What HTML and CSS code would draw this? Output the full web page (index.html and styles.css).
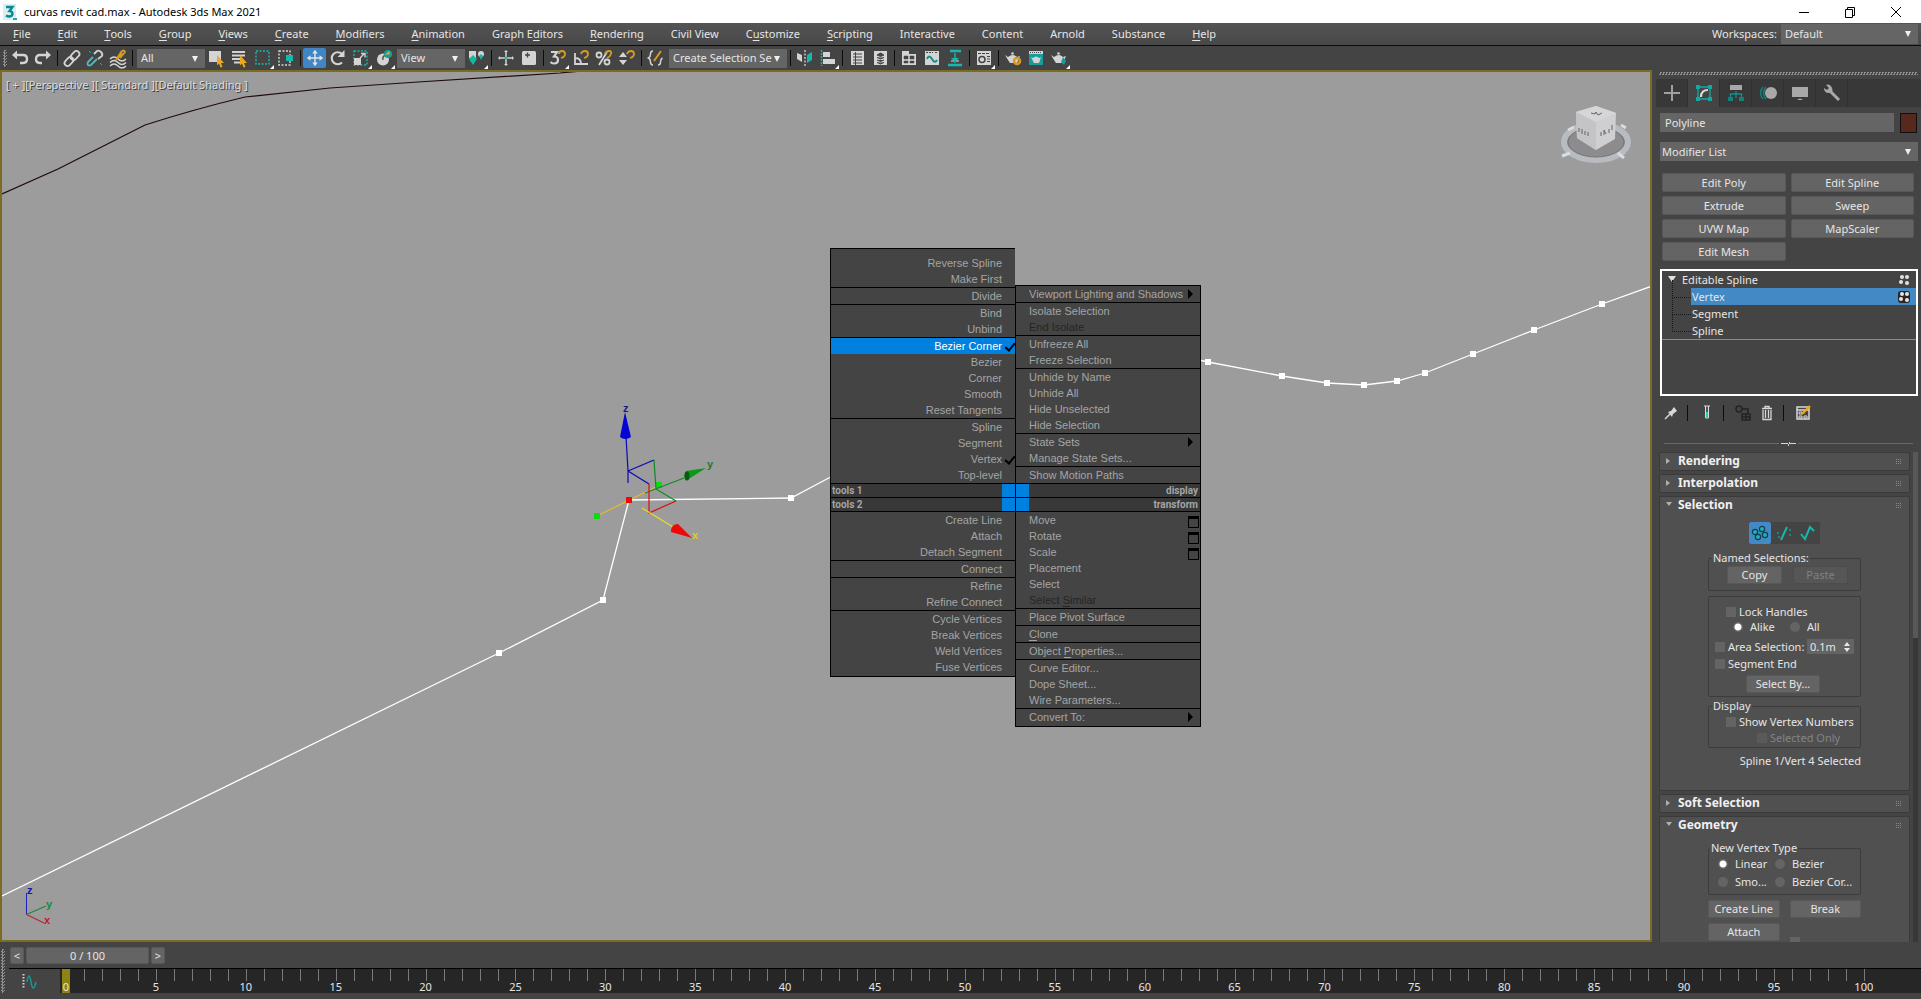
FILE: index.html
```html
<!DOCTYPE html>
<html lang="en">
<head>
<meta charset="utf-8">
<title>curvas revit cad.max - Autodesk 3ds Max 2021</title>
<link rel="stylesheet" href="styles.css">
</head>
<body>
<header class="titlebar">
  <svg class="app-icon" width="16" height="16" viewBox="0 0 16 16"><rect width="13" height="16" fill="#d8eef0"/><path d="M3 3h6.500l-3 4q3 .3 3 2.800t-3 2.700q-2 0-3.500-1" fill="none" stroke="#0a8a92" stroke-width="2.400"/><path d="M10 15h4" stroke="#18b0b0" stroke-width="2"/></svg>
  <h1 class="title">curvas revit cad.max - Autodesk 3ds Max 2021</h1>
  <div class="window-buttons">
    <button aria-label="Minimize"><svg width="12" height="12"><path d="M1 6.500h10" stroke="#000"/></svg></button>
    <button aria-label="Restore"><svg width="12" height="12"><path d="M1.500 3.500h7v8h-7zM3.500 3.500v-2h7v8h-2" fill="none" stroke="#000"/></svg></button>
    <button aria-label="Close"><svg width="12" height="12"><path d="M1 1l10 10M11 1L1 11" stroke="#000"/></svg></button>
  </div>
</header>

<nav class="menubar">
  <div class="menus">
    <button><u>F</u>ile</button><button><u>E</u>dit</button><button><u>T</u>ools</button><button><u>G</u>roup</button><button><u>V</u>iews</button><button><u>C</u>reate</button><button><u>M</u>odifiers</button><button><u>A</u>nimation</button><button>Graph E<u>d</u>itors</button><button><u>R</u>endering</button><button>Civil View</button><button>C<u>u</u>stomize</button><button><u>S</u>cripting</button><button>Interactive</button><button>Content</button><button>Arnold</button><button>Substance</button><button><u>H</u>elp</button>
  </div>
  <label for="workspace">Workspaces:</label>
  <span class="select workspace"><select id="workspace"><option>Default</option></select></span>
</nav>

<div class="toolbar">
  <span class="grip"></span>
  <button aria-label="Undo"><svg viewBox="0 0 22 22"><path d="M5 8h9q4 0 4 4t-4 4h-3" fill="none" stroke="#d4d4d4" stroke-width="2.400"/><path d="M8 3.500v9L3 8z" fill="#d4d4d4"/></svg></button>
  <button aria-label="Redo"><svg viewBox="0 0 22 22"><path d="M17 8H8q-4 0-4 4t4 4h2" fill="none" stroke="#d4d4d4" stroke-width="2.400"/><path d="M14 3.500v9L19 8z" fill="#d4d4d4"/></svg></button>
  <i class="sep"></i>
  <button aria-label="Link"><svg viewBox="0 0 22 22"><g fill="none" stroke="#d4d4d4" stroke-width="1.800"><rect x="9" y="5.500" width="10" height="6" rx="3" transform="rotate(-45 14 8.500)"/><rect x="3" y="11.500" width="10" height="6" rx="3" transform="rotate(-45 8 14.500)"/></g></svg></button>
  <button aria-label="Unlink"><svg viewBox="0 0 22 22"><g fill="none" stroke-width="1.800"><path d="M10 7l3-3q2-1 4 1t1 4l-4 3" stroke="#d4d4d4"/><path d="M9 10l-5 5q-1 2 0 3t3 0l6-6" stroke="#58b6bc"/></g><path d="M5 4l2 2M16 16l2 2" stroke="#14b8b0"/></svg></button>
  <button aria-label="Bind to space warp"><svg viewBox="0 0 22 22"><path d="M3 12q4-4 8 0t8 0M3 15.500q4-4 8 0t8 0M3 19q4-4 8 0t8 0" fill="none" stroke="#d4d4d4" stroke-width="1.500"/><path d="M9 13l5-8q3-3 4 0l-5 6M11 11l4-5" fill="none" stroke="#d79b22" stroke-width="1.800"/></svg></button>
  <i class="sep"></i>
  <span class="select filter"><select aria-label="Selection filter"><option>All</option></select></span>
  <button aria-label="Select"><svg viewBox="0 0 22 22"><path d="M3 4h12v11H3z" fill="#d4d4d4"/><path d="M11 8l7 8h-3l1.500 4-2 .5-1.500-4-2 2z" fill="#eca91f"/></svg></button>
  <button aria-label="Select by name"><svg viewBox="0 0 22 22"><path d="M3 5h13M3 8.500h13M3 12h9M5 15.500h6" stroke="#d4d4d4" stroke-width="2"/><path d="M11 8l7 8h-3l1.500 4-2 .5-1.500-4-2 2z" fill="#eca91f"/></svg></button>
  <button class="fly" aria-label="Rectangular region"><svg viewBox="0 0 22 22"><rect x="4" y="4" width="13" height="13" fill="none" stroke="#14b8b0" stroke-width="1.400" stroke-dasharray="2 1.500"/></svg></button>
  <button aria-label="Window crossing"><svg viewBox="0 0 22 22"><rect x="4" y="4" width="11" height="14" fill="none" stroke="#d4d4d4" stroke-width="1.400" stroke-dasharray="2 1.500"/><rect x="11" y="8" width="7" height="6" fill="#14b8b0"/></svg></button>
  <i class="sep"></i>
  <button class="on" aria-label="Move"><svg viewBox="0 0 22 22"><path d="M11 5v12M5 11h12" stroke="#e4e4e4" stroke-width="1.600"/><path d="M11 2l3 4H8zM11 20l3-4H8zM2 11l4-3v6zM20 11l-4-3v6z" fill="#e4e4e4"/></svg></button>
  <button aria-label="Rotate"><svg viewBox="0 0 22 22"><path d="M15 15.500a6 6 0 1 1 0-8.500" fill="none" stroke="#d4d4d4" stroke-width="2.200"/><path d="M17.500 3v7h-7z" fill="#d4d4d4"/></svg></button>
  <button class="fly" aria-label="Scale"><svg viewBox="0 0 22 22"><rect x="4" y="4" width="13" height="14" fill="none" stroke="#14b8b0" stroke-width="1.400" stroke-dasharray="2 1.500"/><rect x="4" y="11" width="7" height="7" fill="#d4d4d4"/><path d="M10 11l4-4M11 6.500h4v4" stroke="#d4d4d4" fill="none" stroke-width="1.300"/></svg></button>
  <button class="fly" aria-label="Place"><svg viewBox="0 0 22 22"><circle cx="10" cy="12.500" r="6" fill="#d4d4d4"/><path d="M10 13q-1-4 3-5" fill="none" stroke="#555" stroke-width="1.500"/><circle cx="15" cy="7" r="4" fill="#169e9a"/><path d="M12 8l4-4 1 3z" fill="#eca91f"/></svg></button>
  <span class="select coords"><select aria-label="Reference coordinate system"><option>View</option></select></span>
  <button class="fly" aria-label="Pivot center"><svg viewBox="0 0 22 22"><rect x="3" y="4" width="7" height="7" fill="#d4d4d4"/><rect x="12" y="4" width="6" height="6" rx="3" fill="#d4d4d4"/><path d="M7 18l-4-6 4-4 4 4z" fill="#14b89f"/><path d="M15 13l-2-4 2-2 2 2z" fill="#14b89f"/></svg></button>
  <i class="sep"></i>
  <button aria-label="Manipulate"><svg viewBox="0 0 22 22"><path d="M11 4v14M4 11h14" stroke="#d4d4d4" stroke-width="1.500"/><path d="M11 3l2 2h-4zM11 19l2-2H9zM3 11l2-2v4zM19 11l-2-2v4z" fill="#d4d4d4"/><circle cx="11" cy="11" r="1.600" fill="#14b8b0"/></svg></button>
  <button aria-label="Keyboard shortcut override"><svg viewBox="0 0 22 22"><rect x="4" y="4" width="14" height="14" rx="1.500" fill="#d4d4d4"/><path d="M7 8h5M9.500 5.500v5" stroke="#444" stroke-width="1.400"/></svg></button>
  <i class="sep"></i>
  <button class="fly" aria-label="3D snap"><svg viewBox="0 0 22 22"><path d="M4 5h6l-3 4.500q4 0 4 3.500t-4 3.500q-2 0-3.500-1.500" fill="none" stroke="#d4d4d4" stroke-width="2.200"/><path d="M12 7q0-3 3-3t3 3-4 4" fill="none" stroke="#d79b22" stroke-width="1.800"/></svg></button>
  <button aria-label="Angle snap"><svg viewBox="0 0 22 22"><path d="M5 6v11h13M5 11q6 0 6 6" fill="none" stroke="#d4d4d4" stroke-width="1.800"/><path d="M11 7q1-3 4-3t3 3-4 4" fill="none" stroke="#d79b22" stroke-width="1.800"/></svg></button>
  <button aria-label="Percent snap"><svg viewBox="0 0 22 22"><g fill="none" stroke="#d4d4d4" stroke-width="1.800"><circle cx="6" cy="8" r="2.500"/><circle cx="14" cy="15" r="2.500"/><path d="M14 5L6 18"/></g><path d="M12 7q1-3 4-3t2 3-4 4" fill="none" stroke="#d79b22" stroke-width="1.800"/></svg></button>
  <button aria-label="Spinner snap"><svg viewBox="0 0 22 22"><path d="M7 5l4 5H3zM7 18l4-5H3z" fill="#d4d4d4"/><path d="M11 7q1-3 4-3t3 3-4 4" fill="none" stroke="#d79b22" stroke-width="1.800"/></svg></button>
  <i class="sep"></i>
  <button aria-label="Edit named selection sets"><svg viewBox="0 0 22 22"><path d="M8 4Q5.500 4 5.500 7T3.500 11q2 1 2 4t2.500 3M13 18q2.500 0 2.500-3t2-4" fill="none" stroke="#d4d4d4" stroke-width="1.500"/><path d="M9 14L16 4" stroke="#d79b22" stroke-width="2"/></svg></button>
  <span class="select sets"><select aria-label="Named selection sets"><option>Create Selection Se</option></select></span>
  <i class="sep"></i>
  <button aria-label="Mirror"><svg viewBox="0 0 22 22"><path d="M3 6l5 2v7l-5-3z" fill="#d4d4d4"/><path d="M11 3v16" stroke="#d4d4d4" stroke-width="1.300" stroke-dasharray="2 1.500"/><path d="M18 5l-5 3v8l5-3z" fill="#14b8b0"/></svg></button>
  <button class="fly" aria-label="Align"><svg viewBox="0 0 22 22"><path d="M4.500 3v16" stroke="#14b8b0" stroke-width="1.400" stroke-dasharray="2 1"/><path d="M6 5h7v5H6zM6 12h12v5H6z" fill="#d4d4d4"/></svg></button>
  <i class="sep"></i>
  <button aria-label="Scene explorer"><svg viewBox="0 0 22 22"><path d="M5 4h13v14H5z" fill="#d4d4d4"/><path d="M7 7h9M7 10h9M7 13h9M7 16h9M9.500 5v13" stroke="#444"/></svg></button>
  <button aria-label="Layer explorer"><svg viewBox="0 0 22 22"><path d="M5 4h13v14H5z" fill="#d4d4d4"/><path d="M8 8l3.500-2L15 8l-3.500 1.500zM8 10.500l3.500 1.500 3.500-1.500M8 13l3.500 1.500L15 13M8 15.500l3.500 1.500 3.500-1.500" fill="#444" stroke="#444"/></svg></button>
  <i class="sep"></i>
  <button aria-label="Ribbon"><svg viewBox="0 0 22 22"><path d="M4 4h7v3h7v11H4z" fill="#d4d4d4"/><path d="M6 9h4v3H6zM6 14h4v2H6zM12 9h4v3h-4zM12 14h4v2h-4zM13 4v2" fill="#444" stroke="#444" stroke-width=".5"/></svg></button>
  <button aria-label="Curve editor"><svg viewBox="0 0 22 22"><path d="M4 4h14v14H4z" fill="#d4d4d4"/><path d="M5 5.500h7M14 5.500h3" stroke="#444" stroke-dasharray="2 1"/><path d="M6 12q2-5 5 0t5 1" fill="none" stroke="#128e8a" stroke-width="2"/></svg></button>
  <button aria-label="Schematic view"><svg viewBox="0 0 22 22"><path d="M6 4h11M4 18h14" stroke="#14b8b0" stroke-width="2.400"/><path d="M11 6v10" stroke="#14b8b0" stroke-width="1.400"/><path d="M11 15l-4-4h8z" fill="#14b8b0"/><path d="M7 14h8" stroke="#d4d4d4" stroke-dasharray="3 2"/></svg></button>
  <i class="sep"></i>
  <button class="fly" aria-label="Material editor"><svg viewBox="0 0 22 22"><path d="M4 4h14v14H4z" fill="#d4d4d4"/><path d="M5 6.500h12" stroke="#444" stroke-dasharray="3 1"/><circle cx="9" cy="12.500" r="3" fill="none" stroke="#444" stroke-width="1.500"/><path d="M14 9.500h3M14 12h3M14 14.500h3" stroke="#444"/></svg></button>
  <i class="sep"></i>
  <button aria-label="Render setup"><svg viewBox="0 0 22 22"><path d="M3 8l3 2q5-4 9 0l3-1-3 7H8l-2-3z" fill="#d4d4d4"/><circle cx="10.500" cy="6.500" r="1.300" fill="#d4d4d4"/><circle cx="15" cy="14" r="3" fill="none" stroke="#d79b22" stroke-width="2.500"/></svg></button>
  <button aria-label="Rendered frame"><svg viewBox="0 0 22 22"><path d="M4 4h14v3H4z" fill="#d4d4d4"/><path d="M4 7h14v11H4z" fill="#169e9a"/><path d="M5 5.500h11" stroke="#444" stroke-dasharray="1 1"/><path d="M6 10l2 1q3-3 6 0l2-1-2 6H9l-1-2z" fill="#d4d4d4"/></svg></button>
  <button class="fly" aria-label="Render"><svg viewBox="0 0 22 22"><path d="M3 8l3 2q5-4 9 0l3-1-3 7H8l-2-3z" fill="#d4d4d4"/><circle cx="10.500" cy="6.500" r="1.300" fill="#d4d4d4"/><path d="M15 10l3 4-2 4-3-3z" fill="#169e9a"/></svg></button>
</div>

<main class="workspace-area">
  <section class="viewport" aria-label="Perspective viewport">
    <svg class="scene" width="100%" height="100%">
      <g transform="translate(-2 -72)">
        <path d="M2 194L58 169L145 125Q195 109 245 97L330 88L418 82L560 73L582 71" fill="none" stroke="#200a0a" stroke-width="1.200"/>
        <path d="M2 896L499 653L603 600L629 500L791 498L840 472M1190 358L1208 362L1282 376L1327 383L1364 385L1397 381L1425 373L1473 354L1534 330L1602 304L1652 286" fill="none" stroke="#fff" stroke-width="1.300"/>
        <path d="M496 650h6v6h-6zM600 597h6v6h-6zM788 495h6v6h-6zM1205 359h6v6h-6zM1279 373h6v6h-6zM1324 380h6v6h-6zM1361 382h6v6h-6zM1394 378h6v6h-6zM1422 370h6v6h-6zM1470 351h6v6h-6zM1531 327h6v6h-6zM1599 301h6v6h-6z" fill="#fff"/>
        <path d="M597 516L660 485" stroke="#e0b838" stroke-width="1.300"/>
        <path d="M594 513h6v6h-6zM656 482h6v6h-6z" fill="#0cdc0c"/>
        <path d="M626 497h6v6h-6z" fill="#e80c0c"/>
        <g fill="none" stroke-width="1.200">
          <path d="M626 436L628 471V483M628 471L654 460M628 471L649 484" stroke="#0808b4"/>
          <path d="M654 460L656 489L676 501M645 493L684 478" stroke="#108a24"/>
          <path d="M649 484V513L676 501" stroke="#d80c18"/>
          <path d="M642 508L673 527" stroke="#e8e020"/>
        </g>
        <path d="M625 412L620 437q5 4 11 0z" fill="#0404d4"/>
        <path d="M706 468L686 471q-4 5 1 9z" fill="#0a9a18"/><ellipse cx="687" cy="476" rx="2.500" ry="4.500" fill="#0a5a14"/>
        <path d="M692 538L678 524q-7 0-7 8z" fill="#ee0808"/>
        <g class="axis"><text x="623" y="412" fill="#181878">z</text><text x="707" y="468" fill="#1a7a2c">y</text><text x="692" y="539" fill="#d8d020">x</text>
        <text x="27" y="894" fill="#1414a8">z</text><text x="46" y="908" fill="#128a3c">y</text><text x="44" y="924" fill="#c01c28">x</text></g>
        <path d="M26.500 914V893" stroke="#2020c0"/><path d="M26.500 914.500L46 906" stroke="#188a3c" stroke-width="1.200"/><path d="M26.500 914.500L44 923" stroke="#c02030" stroke-width="1.200"/>
        <g class="viewcube">
          <ellipse cx="1596" cy="142" rx="32" ry="18" fill="#8c8c8e" stroke="#b8bcc0" stroke-width="6"/>
          <ellipse cx="1596" cy="142" rx="28" ry="15" fill="none" stroke="#747478"/>
          <path d="M1562 156l8-3M1618 153l6 5M1568 130l6-3M1626 128l-5-3" stroke="#d8dce0" stroke-width="3"/>
          <path d="M1596 106L1616 113L1615 139L1596 150L1577 138L1576 112z" fill="#cfcfd1"/>
          <path d="M1596 106L1616 113L1596 122L1576 112z" fill="#d6d6d8"/><path d="M1596 122V150L1577 138L1576 112z" fill="#c4c4c6"/>
          <path d="M1591 113l4 1 1-2 2 3 4-2M1579 128v4M1582 129v5M1585 131v4M1588 132v4M1601 136v-4M1604 135v-5l2 4M1609 133v-4M1612 130v-5" fill="none" stroke="#646468"/>
        </g>
      </g>
    </svg>
    <div class="view-label"><span>[ + ]</span><span>[Perspective ]</span><span>[ Standard ]</span><span>[Default Shading ]</span></div>

    <div class="quad">
      <ul class="menu left top">
        <li>Reverse Spline</li><li>Make First</li><li class="line">Divide</li><li class="line">Bind</li><li>Unbind</li>
        <li class="line active checked">Bezier Corner</li><li>Bezier</li><li>Corner</li><li>Smooth</li><li>Reset Tangents</li>
        <li class="line">Spline</li><li>Segment</li><li class="checked">Vertex</li><li>Top-level</li><li class="head">tools 1</li>
      </ul>
      <ul class="menu right top">
        <li class="sub">Viewport Lighting and Shadows</li><li class="line">Isolate Selection</li><li class="off">End Isolate</li>
        <li class="line">Unfreeze All</li><li>Freeze Selection</li><li class="line">Unhide by Name</li><li>Unhide All</li><li>Hide Unselected</li><li>Hide Selection</li>
        <li class="line sub">State Sets</li><li>Manage State Sets...</li><li class="line">Show Motion Paths</li><li class="head">display</li>
      </ul>
      <ul class="menu left bottom">
        <li class="head">tools 2</li><li class="line">Create Line</li><li>Attach</li><li>Detach Segment</li><li class="line">Connect</li><li class="line">Refine</li><li>Refine Connect</li>
        <li class="line">Cycle Vertices</li><li>Break Vertices</li><li>Weld Vertices</li><li>Fuse Vertices</li>
      </ul>
      <ul class="menu right bottom">
        <li class="head">transform</li><li class="line box">Move</li><li class="box">Rotate</li><li class="box">Scale</li><li>Placement</li><li>Select</li><li class="off">Select <u>S</u>imilar</li>
        <li class="line">Place Pivot Surface</li><li class="line"><u>C</u>lone</li><li class="line">Object <u>P</u>roperties...</li><li class="line">Curve Editor...</li><li>Dope Sheet...</li><li>Wire Parameters...</li><li class="line sub">Convert To:</li>
      </ul>
    </div>
  </section>

  <aside class="panel">
    <div class="dots"></div>
    <div class="tabs">
      <button aria-label="Create"><svg viewBox="0 0 20 20"><path d="M10 2v16M2 10h16" stroke="#a0a0a0" stroke-width="2"/></svg></button>
      <button class="current" aria-label="Modify"><svg viewBox="0 0 20 20"><path d="M4 4h12v12H4z" fill="none" stroke="#14a8a4" stroke-width="1.300"/><path d="M2 2h4v4H2zM14 2h4v4h-4zM2 14h4v4H2zM14 14h4v4h-4z" fill="#14a8a4"/><path d="M7 14q0-7 7-7" fill="none" stroke="#d8d8d8" stroke-width="2.200"/></svg></button>
      <button aria-label="Hierarchy"><svg viewBox="0 0 20 20"><path d="M4 2h12v5H4z" fill="#a8a8a8"/><path d="M10 8v7M4.500 15v-4h11v4" fill="none" stroke="#14908c" stroke-width="1.300"/><path d="M2 14h5v4H2zM13 14h5v4h-5z" fill="#14807c"/></svg></button>
      <button aria-label="Motion"><svg viewBox="0 0 20 20"><path d="M5 4q-5 6 0 12M8 4q-5 6 0 12" fill="none" stroke="#14807c" stroke-width="1.500"/><circle cx="13" cy="10" r="6" fill="#a8a8a8"/></svg></button>
      <button aria-label="Display"><svg viewBox="0 0 20 20"><path d="M2 4h16v10H2zM7 17q3-3 6 0z" fill="#a8a8a8"/></svg></button>
      <button aria-label="Utilities"><svg viewBox="0 0 20 20"><path d="M8 8l9 9" stroke="#a8a8a8" stroke-width="3"/><path d="M4 2l3 3-2 2-3-2q0 5 5 5t3-5-6-3z" fill="#a8a8a8"/></svg></button>
    </div>
    <div class="name-row"><input type="text" aria-label="Object name" value="Polyline"><button class="swatch" aria-label="Object color"></button></div>
    <span class="select modifiers"><select aria-label="Modifier List"><option>Modifier List</option></select></span>
    <div class="mod-buttons"><button>Edit Poly</button><button>Edit Spline</button><button>Extrude</button><button>Sweep</button><button>UVW Map</button><button>MapScaler</button><button>Edit Mesh</button></div>
    <div class="stack">
      <div class="stack-root"><span>Editable Spline</span><svg width="12" height="12"><g fill="#e4e4e4"><circle cx="4" cy="3" r="2"/><circle cx="9" cy="3" r="2"/><circle cx="3" cy="8" r="2"/><circle cx="9" cy="9" r="2"/></g></svg></div>
      <ul>
        <li class="picked"><span>Vertex</span><svg width="12" height="12"><rect width="12" height="12" rx="3" fill="#282828"/><g fill="#e4e4e4"><circle cx="4" cy="3" r="2"/><circle cx="9" cy="3" r="2"/><circle cx="3" cy="8" r="2"/><circle cx="9" cy="9" r="2"/></g></svg></li>
        <li><span>Segment</span></li><li><span>Spline</span></li>
      </ul>
    </div>
    <div class="stack-tools">
      <button aria-label="Pin stack"><svg viewBox="0 0 16 16"><path d="M2 14l5-5" stroke="#d8d8d8" stroke-width="1.500"/><path d="M5 7l4 5 1-3 4-3-3-4-3 4z" fill="#d8d8d8"/></svg></button>
      <i></i>
      <button aria-label="Show end result"><svg viewBox="0 0 16 16"><path d="M5 1h6M6.500 1v12h3V1" fill="#555" stroke="#d8d8d8"/><path d="M7 7h2v5H7z" fill="#20d0b8"/></svg></button>
      <i></i>
      <button aria-label="Make unique"><svg viewBox="0 0 16 16"><g fill="none" stroke="#222" stroke-width="1.500"><circle cx="4" cy="4" r="3"/><path d="M7 4h6v5M7 9h8v6H7zM11 9v6M7 12h8"/></g></svg></button>
      <button aria-label="Remove modifier"><svg viewBox="0 0 16 16"><path d="M3 3.500h10M6 3V1.500h4V3M4 5v9.500h8V5M6.500 5v8M9.500 5v8" fill="none" stroke="#d8d8d8" stroke-width="1.300"/></svg></button>
      <i></i>
      <button aria-label="Configure modifier sets"><svg viewBox="0 0 16 16"><path d="M2 2h12v12H2zM2 5h12" fill="none" stroke="#d8d8d8" stroke-width="1.500"/><path d="M4 7h3v2H4zM4 11h3v2H4zM9 11h3v2H9z" fill="none" stroke="#d8d8d8"/><path d="M7 9l8-8" stroke="#eca91f" stroke-width="2.400"/></svg></button>
    </div>
    <div class="splitter"></div>
    <div class="rollouts">
      <div class="rollout-list">
        <section class="rollout"><h2>Rendering</h2></section>
        <section class="rollout"><h2>Interpolation</h2></section>
        <section class="rollout open selection"><h2>Selection</h2>
          <div class="levels">
            <button class="on" aria-label="Vertex"><svg viewBox="0 0 20 20"><g fill="#14b8b0" stroke="#123c50" stroke-width="1.200"><circle cx="5" cy="9" r="2.600"/><circle cx="12" cy="6" r="2.600"/><circle cx="8" cy="14" r="2.600"/><circle cx="15" cy="12" r="2.600"/></g></svg></button>
            <button aria-label="Segment"><svg viewBox="0 0 20 20"><path d="M7 17L13 4" stroke="#14b8a8" stroke-width="2"/><path d="M3 9h2v2H3zM4 13h2v2H4zM15 6h2v2h-2zM15 11h2v2h-2z" fill="#148c84"/></svg></button>
            <button aria-label="Spline"><svg viewBox="0 0 20 20"><path d="M4 11l4 5 5-12 4 4" fill="none" stroke="#14b8a8" stroke-width="2"/></svg></button>
          </div>
          <fieldset class="named"><legend>Named Selections:</legend><button>Copy</button><button disabled>Paste</button></fieldset>
          <fieldset class="handles" aria-label="Handles">
            <label class="indent"><input type="checkbox">Lock Handles</label>
            <div class="pair"><label><input type="radio" name="lock" checked>Alike</label><label><input type="radio" name="lock">All</label></div>
            <div class="area"><label><input type="checkbox">Area Selection:</label><span class="spinner"><input type="text" aria-label="Area size" value="0.1m"></span></div>
            <label><input type="checkbox">Segment End</label>
            <button class="select-by">Select By...</button>
          </fieldset>
          <fieldset class="display"><legend>Display</legend>
            <label class="indent"><input type="checkbox">Show Vertex Numbers</label>
            <label class="deep disabled"><input type="checkbox" disabled>Selected Only</label>
          </fieldset>
          <p class="status">Spline 1/Vert 4 Selected</p>
        </section>
        <section class="rollout"><h2>Soft Selection</h2></section>
        <section class="rollout open geometry"><h2>Geometry</h2>
          <fieldset class="vertex-type"><legend>New Vertex Type</legend>
            <label><input type="radio" name="vtype" checked>Linear</label><label><input type="radio" name="vtype">Bezier</label>
            <label><input type="radio" name="vtype">Smo...</label><label><input type="radio" name="vtype">Bezier Cor...</label>
          </fieldset>
          <div class="geo-buttons"><button>Create Line</button><button>Break</button><button>Attach</button><span class="cut"><input type="checkbox" aria-label="Attach multiple"></span></div>
        </section>
      </div>
      <div class="scrollbar"></div>
    </div>
  </aside>
</main>

<footer class="timeline">
  <span class="grip"></span>
  <div class="time-body">
    <div class="time-slider"><button aria-label="Previous frame">&lt;</button><button class="thumb">0 / 100</button><button aria-label="Next frame">&gt;</button></div>
    <div class="track-row">
      <button class="mini-curve" aria-label="Open mini curve editor"><svg width="16" height="16"><path d="M2.500 1v14" stroke="#d0d0d0" stroke-width="2" stroke-dasharray="1.500 1.500"/><path d="M6 9q2-12 4 0t5 0" fill="none" stroke="#149c98" stroke-width="1.500"/></svg></button>
      <div class="track">
        <span class="first"><b>0</b></span><span><b>5</b></span><span><b>10</b></span><span><b>15</b></span><span><b>20</b></span><span><b>25</b></span><span><b>30</b></span><span><b>35</b></span><span><b>40</b></span><span><b>45</b></span><span><b>50</b></span><span><b>55</b></span><span><b>60</b></span><span><b>65</b></span><span><b>70</b></span><span><b>75</b></span><span><b>80</b></span><span><b>85</b></span><span><b>90</b></span><span><b>95</b></span><span class="last"><b>100</b></span>
      </div>
    </div>
  </div>
</footer>
</body>
</html>
```
FILE: styles.css
```css
* { box-sizing: border-box; }
body {
  margin: 0; height: 100vh; overflow: hidden;
  display: flex; flex-direction: column;
  background: #444; color: #e6e6e6;
  font: 11px/16px "Noto Sans", "Open Sans", sans-serif;
}
button, input, select { font: inherit; color: inherit; border: 0; margin: 0; padding: 0; background: none; }
button { display: flex; align-items: center; justify-content: center; white-space: nowrap; }
ul { list-style: none; margin: 0; padding: 0; }
u { text-underline-offset: 2px; }

.titlebar { flex: none; height: 23px; display: flex; align-items: center; padding-left: 3px; background: #fff; color: #000; }
.app-icon { margin-right: 5px; }
.title { flex: 1; margin: 0; font-size: 11px; font-weight: 400; }
.window-buttons { display: flex; height: 20px; margin-right: 2px; }
.window-buttons button { width: 46px; }

.menubar { flex: none; height: 23px; display: flex; align-items: center; padding: 0 3px 0 13px; border-bottom: 1px solid #0c0c0c; background: linear-gradient(#545454, #484848); }
.menus { flex: 1; display: flex; gap: 27px; }
.menubar label { margin-right: 4px; }

.select { position: relative; display: block; flex: none; height: 19px; background: #656565; }
.select select { width: 100%; height: 100%; padding: 0 4px; appearance: none; outline: 0; }
.select::after { content: ""; position: absolute; right: 7px; top: 7px; border: 3px solid transparent; border-top: 6px solid #f0f0f0; border-bottom: 0; pointer-events: none; }
.workspace { width: 137px; height: 20px; }

.toolbar { flex: none; height: 24px; display: flex; align-items: center; }
.toolbar .grip { width: 4px; height: 17px; margin: 0 1px 0 3px; }
.grip { background: repeating-conic-gradient(#909090 0 25%, #444 0 50%) 0 0 / 3px 3px; }
.toolbar button { position: relative; width: 23px; height: 22px; }
.toolbar button svg { width: 22px; height: 22px; }
.toolbar .on { height: 20px; border-radius: 2px; background: #4086c4; }
.toolbar .on svg { width: 20px; height: 20px; }
.fly::after { content: ""; position: absolute; right: 0; bottom: 0; border: 2px solid transparent; border-right-color: #fff; border-bottom-color: #fff; }
.sep { width: 6px; height: 16px; background: linear-gradient(#0c0c0c, #0c0c0c) center / 1px 100% no-repeat; }
.filter, .coords { width: 68px; margin-left: 2px; }
.sets { width: 118px; margin-left: 2px; }

.workspace-area { flex: 1; min-height: 0; display: grid; grid-template-columns: 1fr 269px; }
.viewport { position: relative; overflow: hidden; border: 2px solid #7c6c20; background: #9c9c9c; }
.scene { display: block; }
.axis { font: bold 11px "Liberation Sans", sans-serif; }
.view-label { position: absolute; left: 4px; top: 5px; display: flex; color: #dcdcdc; text-shadow: 1px 1px 0 #404040; }

.quad { position: absolute; left: 828px; top: 176px; display: grid; grid-template-columns: 185px 186px; font: 11px/16px "Liberation Sans", Arial, sans-serif; color: #a4a4a4; }
.menu { background: #444; border: 1px solid #000; }
.menu.left { border-right: 0; text-align: right; }
.menu.top { align-self: end; border-bottom: 0; }
.menu.bottom { align-self: start; padding-bottom: 1px; border-top: 0; }
.menu.left.top { padding-top: 6px; }
.menu li { position: relative; height: 16px; padding: 0 13px; }
.menu .line { height: 17px; border-top: 1px solid #000; }
.menu .active { background: #0081e0; color: #fff; }
.menu .off { color: #242424; }
.menu .head { height: 14px; padding: 0 2px; border-top: 1px solid #000; background: #383838 linear-gradient(#0081e0, #0081e0) no-repeat; background-size: 13px 100%; font: bold 10px/14px Roboto, sans-serif; }
.menu.left .head { padding-left: 1px; text-align: left; background-position: right; }
.menu.right .head { text-align: right; background-position: left; }
.checked::after { content: ""; position: absolute; right: 2px; top: 3px; width: 4px; height: 8px; border: solid #000; border-width: 0 2px 2px 0; transform: rotate(40deg); }
.sub::after { content: ""; position: absolute; right: 7px; top: 3px; border: 5px solid transparent; border-left: 5px solid #000; border-right: 0; }
.box::after { content: ""; position: absolute; right: 1px; top: 4px; width: 9px; height: 8px; border: 1px solid #000; border-top-width: 3px; }

.panel { min-height: 0; display: flex; flex-direction: column; padding: 2px 3px 0 4px; }
.panel > * { flex: none; }
.dots { height: 3px; margin: 0 0 4px 3px; background: repeating-conic-gradient(#909090 0 25%, #444 0 50%) 0 0 / 3px 3px; }
.tabs { height: 28px; display: flex; margin-right: -3px; background: #383838; }
.tabs button { width: 32px; border-right: 1px solid #303030; }
.tabs .current { background: #444; }
.tabs svg { width: 20px; height: 20px; }
.name-row { display: flex; gap: 6px; margin: 6px 1px 9px 4px; }
.name-row input { flex: 1; min-width: 0; height: 19px; padding: 0 5px; background: #656565; }
.swatch { width: 17px; height: 20px; background: #58281f; border: 1px solid #101010; }
.modifiers { margin: 0 0 12px 4px; }
.modifiers select { padding: 0 2px; }
.mod-buttons { display: grid; grid-template-columns: 1fr 1fr; gap: 4px 5px; margin: 0 4px 0 6px; }
.mod-buttons button { height: 19px; }
.mod-buttons button, fieldset button, .geo-buttons button, .time-slider button { background: #646464; border-radius: 2px; border: 1px solid #585858; }
.stack { height: 127px; margin: 8px 0 0 4px; border: 2px solid #fff; }
.stack-root, .stack li { display: flex; align-items: center; justify-content: space-between; height: 17px; padding-right: 6px; }
.stack-root { position: relative; padding-left: 20px; }
.stack-root::before { content: ""; position: absolute; left: 6px; top: 5px; border: 4px solid transparent; border-top: 6px solid #e0e0e0; border-bottom: 0; }
.stack ul { padding-left: 29px; border-bottom: 1px solid #8a8a8a; }
.stack li { position: relative; padding-left: 1px; }
.stack li::before { content: ""; position: absolute; right: 100%; top: -8px; width: 18px; height: 17px; border: dotted #181818; border-width: 0 0 1px 1px; }
.stack .picked { background: #4289c5; }
.stack-tools { height: 34px; display: flex; align-items: center; padding-left: 7px; }
.stack-tools svg { width: 16px; height: 16px; }
.stack-tools button { margin-right: 8px; }
.stack-tools i { width: 1px; height: 16px; margin-right: 11px; background: #0c0c0c; }
.splitter {
  height: 22px; margin: 0 5px 0 8px;
  background:
    repeating-conic-gradient(#d0d0d0 0 25%, #444 0 50%) center 12px / 2px 4px no-repeat,
    linear-gradient(90deg, #686868 46%, #444 46% 47%, #d8d8d8 47% 53%, #444 53% 54%, #686868 54%) 0 13px / 100% 1px no-repeat;
}

.rollouts { flex: 1; min-height: 0; display: flex; gap: 3px; padding-left: 3px; overflow: hidden; }
.panel > .rollouts { flex: 1; }
.rollout-list { flex: 1; display: flex; flex-direction: column; gap: 3px; }
.rollout { flex: none; background: #505050; border: 1px solid #3a3a3a; border-radius: 2px; }
.rollout h2 { position: relative; height: 17px; margin: 0; padding-left: 18px; font-size: 12px; line-height: 16px; color: #f0f0f0; }
.rollout h2::before { content: ""; position: absolute; left: 6px; top: 5px; border: 3px solid transparent; border-left: 4px solid #b0b0b0; border-right: 0; }
.rollout.open h2::before { border: 3px solid transparent; border-top: 4px solid #b0b0b0; border-bottom: 0; }
.rollout h2::after { content: ""; position: absolute; right: 7px; top: 5px; width: 6px; height: 6px; background: repeating-linear-gradient(#505050 0 1px, transparent 1px 2px), repeating-linear-gradient(90deg, #888 0 1px, #505050 1px 2px); }
.selection { height: 295px; }
.scrollbar { width: 5px; background: linear-gradient(#585858, #585858) 0 0 / 100% 186px no-repeat #383838; }
.levels { width: 71px; display: flex; margin: 8px auto 6px; background: #444; }
.levels button { width: 22px; height: 22px; margin-right: 2px; }
.levels .on { background: #4289c5; border-radius: 2px; }
.levels svg { width: 20px; height: 20px; }
fieldset { width: 153px; margin: 0 auto; padding: 0 6px; border: 1px solid #3c3c3c; border-radius: 2px; }
legend { margin-left: -3px; padding: 0 1px; }
fieldset label { display: flex; align-items: center; height: 16px; gap: 3px; white-space: nowrap; }
input[type=checkbox], input[type=radio] { flex: none; appearance: none; width: 10px; height: 10px; background: #646464; }
input[type=radio] { border-radius: 5px; }
input[type=radio]:checked { background: radial-gradient(#fff 3px, #646464 4px); }
input:disabled { background: #5a5a5a; }
.disabled { color: #848484; }
.named { display: flex; gap: 11px; height: 41px; padding: 0 12px 0 18px; }
.named legend { margin-left: -15px; }
.named button { flex: 1; height: 18px; }
fieldset button:disabled { background: #565656; border-color: #4c4c4c; color: #808080; }
.handles { height: 101px; margin-top: 5px; padding-top: 7px; }
.indent { padding-left: 11px; }
.pair { display: flex; gap: 13px; padding-left: 18px; margin-bottom: 5px; }
.pair label { height: 14px; gap: 7px; width: 44px; }
.area { display: flex; justify-content: space-between; margin-bottom: 1px; }
.spinner { position: relative; width: 47px; }
.spinner input { width: 100%; height: 15px; padding: 0 3px; background: #646464; display: block; }
.spinner::before, .spinner::after { content: ""; position: absolute; right: 4px; border: 3px solid transparent; }
.spinner::before { top: 3px; border-bottom: 4px solid #e8e8e8; border-top: 0; }
.spinner::after { top: 9px; border-top: 4px solid #e8e8e8; border-bottom: 0; }
.select-by { width: 74px; height: 18px; margin: 3px 0 0 31px; }
.display { height: 50px; margin-top: 1px; }
.deep { padding-left: 42px; }
.status { width: 153px; margin: 5px auto 0; text-align: right; }
.vertex-type { display: grid; grid-template-columns: 57px 1fr; height: 55px; margin-top: 6px; padding: 0 4px; row-gap: 2px; align-content: start; }
.vertex-type label { gap: 7px; padding-left: 5px; }
.geo-buttons { width: 153px; display: grid; grid-template-columns: 1fr 1fr; gap: 5px 10px; margin: 5px auto 0; }
.geo-buttons button { height: 18px; }
.cut { display: flex; padding-top: 14px; }

.timeline { flex: none; display: flex; height: 57px; padding: 5px 0 6px 1px; }
.timeline .grip { width: 4px; margin: 2px 4px 0 0; }
.time-body { flex: 1; display: flex; flex-direction: column; }
.time-slider { display: flex; gap: 2px; height: 21px; padding-left: 1px; }
.time-slider button { width: 14px; height: 17px; }
.time-slider .thumb { width: 123px; }
.track-row { flex: 1; display: flex; border-top: 1px solid #000; }
.mini-curve { width: 51px; padding-right: 11px; }
.track { flex: 1; display: flex; padding: 0 57px 0 6px; background: #262626; }
.track span { flex: 0 0 5%; height: 100%; display: flex; align-items: flex-end; background: repeating-linear-gradient(90deg, #7a7a7a 0 1px, transparent 1px 18px) 0 0 / 100% 12px no-repeat; }
.track b { width: 30px; margin-left: -15px; font-weight: 400; line-height: 13px; text-align: center; }
.track .last { flex: 0 0 1px; }
.track .first { box-shadow: inset 8px 0 #8c8410; margin: 0 4px 0 -4px; padding-left: 4px; background-position: 4px 0; }
```
